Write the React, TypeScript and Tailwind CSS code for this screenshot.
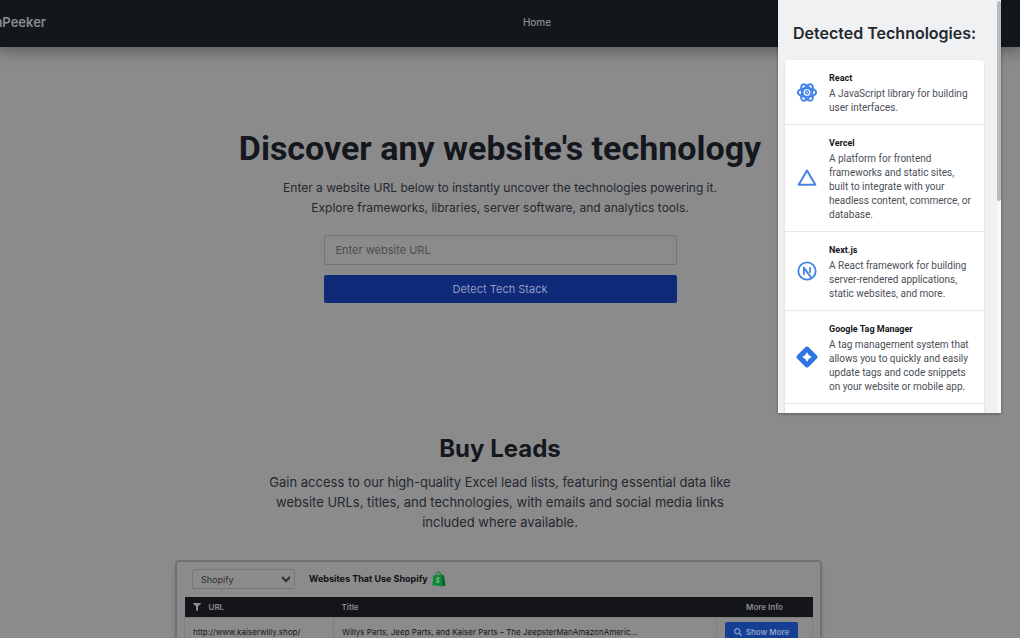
import type { ReactNode } from 'react';
import { FaFilter, FaSearch } from 'react-icons/fa';

interface Technology {
  name: string;
  description: string;
  icon: ReactNode;
}

interface Lead {
  url: string;
  title: string;
}

function ReactIcon() {
  return (
    <svg viewBox="0 0 24 24" className="h-[21px] w-5" fill="none" stroke="#4584ea" strokeWidth="2.4" aria-hidden="true">
      <ellipse cx="12" cy="12" rx="11" ry="5.2" />
      <ellipse cx="12" cy="12" rx="11" ry="5.2" transform="rotate(60 12 12)" />
      <ellipse cx="12" cy="12" rx="11" ry="5.2" transform="rotate(120 12 12)" />
      <circle cx="12" cy="12" r="1.8" strokeWidth="1.6" />
    </svg>
  );
}

function VercelIcon() {
  return (
    <svg viewBox="0 0 24 24" className="h-5 w-5" fill="none" stroke="#4583e6" strokeWidth="2.4" strokeLinejoin="round" aria-hidden="true">
      <path d="M12 3 22 20H2Z" />
    </svg>
  );
}

function NextIcon() {
  return (
    <svg viewBox="0 0 24 24" className="h-5 w-5" fill="none" stroke="#4583e6" strokeWidth="2.2" strokeLinejoin="round" aria-hidden="true">
      <circle cx="12" cy="12" r="10.4" />
      <path d="M8.2 16.5V8l9.3 12.5" />
      <path d="M15.6 7.6v6.4" />
    </svg>
  );
}

function TagManagerIcon() {
  return (
    <svg viewBox="0 0 24 24" className="-mx-0.5 h-6 w-6" aria-hidden="true">
      <rect x="4" y="4" width="16" height="16" rx="2" fill="#2f74e4" transform="rotate(45 12 12)" />
      <path d="M12 7.8 13.6 10.4 16.2 12 13.6 13.6 12 16.2 10.4 13.6 7.8 12 10.4 10.4Z" fill="#fff" stroke="#fff" strokeWidth=".8" />
    </svg>
  );
}

function ShopifyIcon() {
  return (
    <svg viewBox="0 0 14 16" className="h-4 w-[14px] shrink-0" aria-hidden="true">
      <path d="M1.4 4.6 9.4 3.4 10.4 15.4.4 14.2Z" fill="#0b8a35" />
      <path d="m9.4 3.4 2.6 1 1.6 10-3.2 1Z" fill="#05682a" />
      <path d="M3.8 4.6C4.2 2.4 5.4 1 6.6 1s1.8 1 1.8 2.8" fill="none" stroke="#0b8a35" strokeWidth="1.1" />
      <path d="M7.6 7c-2.4-.8-3.4.8-1.8 2 1.8 1.3.6 3.1-1.6 1.8" fill="none" stroke="#9fb3a5" strokeWidth="1.2" />
    </svg>
  );
}

const technologies: Technology[] = [
  { name: 'React', description: 'A JavaScript library for building user interfaces.', icon: <ReactIcon /> },
  {
    name: 'Vercel',
    description: 'A platform for frontend frameworks and static sites, built to integrate with your headless content, commerce, or database.',
    icon: <VercelIcon />,
  },
  { name: 'Next.js', description: 'A React framework for building server-rendered applications, static websites, and more.', icon: <NextIcon /> },
  {
    name: 'Google Tag Manager',
    description: 'A tag management system that allows you to quickly and easily update tags and code snippets on your website or mobile app.',
    icon: <TagManagerIcon />,
  },
];

const leads: Lead[] = [
  { url: 'http://www.kaiserwilly.shop/', title: 'Willys Parts, Jeep Parts, and Kaiser Parts – The JeepsterManAmazonAmeric...' },
];

function Header() {
  return (
    <header className="flex h-[47px] items-center bg-[#13171c] pb-0.5 text-[#8b8c8e] shadow-[0_2px_14px_2px_rgba(0,0,0,0.35)]">
      <div className="flex w-[54px] justify-end pr-2">
        <a href="#" className="text-[13px] font-semibold">TechPeeker</a>
      </div>
      <nav className="flex flex-1 justify-center">
        <a href="#" className="text-[10px] font-medium">Home</a>
      </nav>
    </header>
  );
}

function Hero() {
  return (
    <section className="flex flex-col items-center px-4 pt-20 text-center">
      <h1 className="font-['Roboto',sans-serif] text-[34px] leading-[42px] font-bold text-[#14171d]">Discover any website's technology</h1>
      <p className="mt-[9px] max-w-[450px] text-xs leading-5 text-[#24282f]">
        Enter a website URL below to instantly uncover the technologies powering it. Explore frameworks, libraries, server software, and analytics tools.
      </p>
      <form className="mt-[17px] flex w-full max-w-[353px] flex-col gap-[10px]" onSubmit={(e) => e.preventDefault()}>
        <input
          type="url"
          aria-label="Website URL"
          placeholder="Enter website URL"
          className="h-[30px] rounded-xs border border-[#747578] bg-transparent px-[11px] text-[11px] text-[#24282f] placeholder:text-[#4b4d52]"
        />
        <button type="submit" className="h-7 rounded-xs bg-[#102a7a] text-[11px] text-[#8f9bc0]">
          Detect Tech Stack
        </button>
      </form>
    </section>
  );
}

function LeadsTable() {
  return (
    <div className="mt-[28px] mr-[3px] w-full max-w-[647px] rounded-sm border-2 border-[#707174] px-[7px] pt-[7px] shadow-md">
      <div className="flex items-center gap-[14px] pl-2">
        <select
          aria-label="Technology"
          className="h-5 w-[103px] rounded-xs border border-[#75767a] bg-transparent px-1 text-[9px] text-[#2d3036]"
        >
          <option>Shopify</option>
        </select>
        <h3 className="flex items-center gap-1 text-[9px] font-bold text-[#101215]">
          Websites That Use Shopify
          <ShopifyIcon />
        </h3>
      </div>
      <table className="mt-2 w-full table-fixed border-collapse text-left text-[8px]">
        <thead className="bg-[#13151b] text-[#8b8c8e]">
          <tr className="h-5">
            <th className="w-[149px] pl-2 font-semibold">
              <span className="flex items-center gap-2">
                <FaFilter className="h-2 w-2" />
                URL
              </span>
            </th>
            <th className="px-2 font-semibold">Title</th>
            <th className="w-[96px] text-center font-semibold">More Info</th>
          </tr>
        </thead>
        <tbody className="text-[#14161a]">
          {leads.map((lead) => (
            <tr key={lead.url} className="h-[30px] border border-[#7e7f81]">
              <td className="border-r border-[#7e7f81] pl-2">{lead.url}</td>
              <td className="truncate border-r border-[#7e7f81] px-2">{lead.title}</td>
              <td className="px-2">
                <button type="button" className="flex h-5 w-[73px] items-center justify-center gap-1 rounded-xs bg-[#153f94] text-[8px] font-semibold text-[#8f9fc4]">
                  <FaSearch className="h-2 w-2" />
                  Show More
                </button>
              </td>
            </tr>
          ))}
        </tbody>
      </table>
    </div>
  );
}

function DetectedPanel() {
  return (
    <aside className="absolute top-0 right-[19px] flex h-[413px] w-[223px] overflow-hidden bg-[#f0f1f3] shadow-[0_1px_3px_rgba(0,0,0,0.35)]">
      <div className="min-w-0 flex-1 pt-[22px] pl-[7px]">
        <h2 className="pl-2 text-base leading-[22px] font-semibold whitespace-nowrap text-[#24282f]">Detected Technologies:</h2>
        <ul className="mt-4 w-[199px] divide-y divide-[#e9eaec] rounded-t-sm bg-white font-['Roboto',sans-serif] shadow-sm">
          {technologies.map((tech) => (
            <li key={tech.name} className="flex items-center gap-3 py-[9px] pr-[11px] pl-3">
              <span className="shrink-0">{tech.icon}</span>
              <div>
                <h3 className="text-[9px] leading-[18px] font-bold text-[#16181c]">{tech.name}</h3>
                <p className="text-[10px] leading-[14px] text-[#4a4f58]">{tech.description}</p>
              </div>
            </li>
          ))}
          <li className="h-8" />
        </ul>
      </div>
      <div className="w-1 bg-[#f8f8f8] pt-px">
        <div className="h-[200px] rounded-full bg-[#b9babb]" />
      </div>
    </aside>
  );
}

export default function App() {
  return (
    <div className="relative h-screen overflow-hidden bg-[#8b8b8b] font-['Inter',sans-serif]">
      <Header />
      <main className="pr-5">
        <Hero />
        <section className="flex flex-col items-center px-4 pt-[130px] text-center">
          <h2 className="text-2xl leading-8 font-bold text-[#14171d]">Buy Leads</h2>
          <p className="mt-[7px] max-w-[466px] text-[13px] leading-5 text-[#24282f]">
            Gain access to our high-quality Excel lead lists, featuring essential data like website URLs, titles, and technologies, with emails and social media links included where available.
          </p>
          <LeadsTable />
        </section>
      </main>
      <DetectedPanel />
    </div>
  );
}
